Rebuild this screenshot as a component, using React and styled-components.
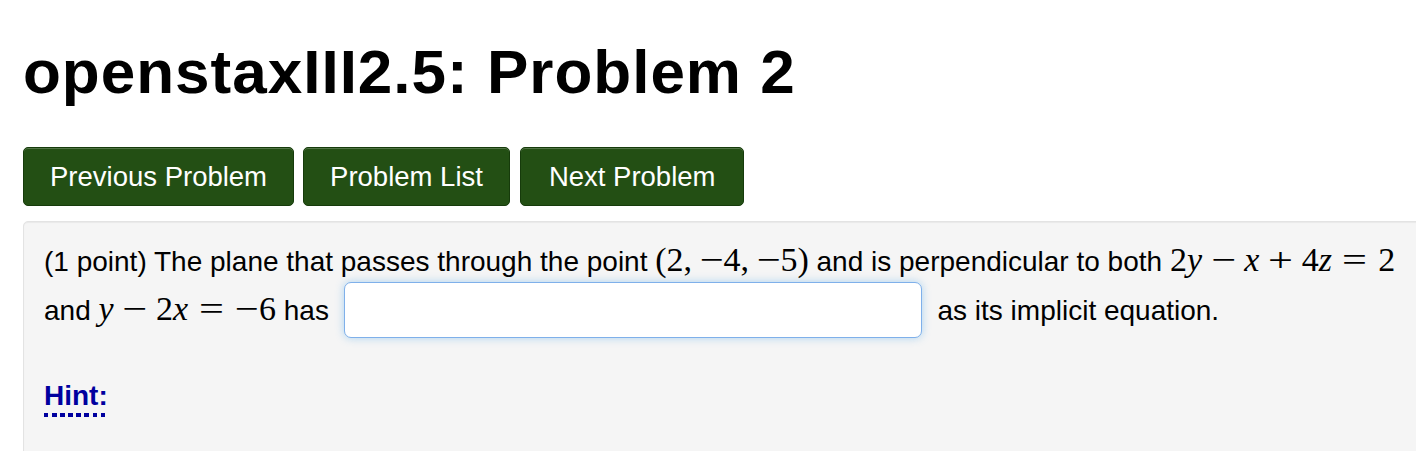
import React from "react";
import styled, { createGlobalStyle } from "styled-components";

const Global = createGlobalStyle`
  html, body {
    margin: 0;
    padding: 0;
    background: #ffffff;
    overflow: hidden;
  }
  body {
    font-family: "Liberation Sans", Arial, Helvetica, sans-serif;
    color: #000;
  }
`;

const Page = styled.div`
  width: 1480px;
  padding-left: 23px;
  box-sizing: border-box;
`;

const Title = styled.h1`
  margin: 41px 0 0;
  font-size: 62px;
  line-height: 62px;
  font-weight: 700;
  letter-spacing: 1px;
`;

const Nav = styled.div`
  display: flex;
  gap: 9px;
  margin-top: 44px;
`;

const NavButton = styled.button`
  height: 59px;
  padding: 0 26px;
  display: flex;
  align-items: center;
  justify-content: center;
  box-sizing: border-box;
  background: #234f14;
  border: 1px solid #163b0b;
  border-radius: 5px;
  box-shadow: inset 0 1px 0 rgba(255, 255, 255, 0.22);
  color: #ffffff;
  font-family: "Liberation Sans", Arial, sans-serif;
  font-size: 27.5px;
  cursor: pointer;
  &:last-child {
    padding: 0 28px;
    margin-left: 1px;
  }
`;

const Well = styled.div`
  margin-top: 15px;
  background: #f5f5f5;
  border: 1px solid #e3e3e3;
  border-radius: 5px;
  box-shadow: inset 0 1px 1px rgba(0, 0, 0, 0.05);
  padding: 17px 20px;
  min-height: 400px;
`;

const Problem = styled.div`
  font-size: 28px;
  line-height: 46px;
`;

const Math = styled.span`
  font-family: "Liberation Serif", "Times New Roman", serif;
  font-size: 34px;
  line-height: 1;
  white-space: nowrap;
`;

const V = styled.i`
  font-style: italic;
`;

const Op = styled.span`
  display: inline-block;
  margin: 0 ${(p) => (p.$rel ? "0.4em" : p.$neg ? "0.08em" : "0.34em")};
  transform: scaleX(${(p) => (p.$neg ? 1.25 : 1.3)});
`;

const Sep = styled.span`
  margin-right: 0.2em;
`;

const AnswerInput = styled.input`
  width: 578px;
  height: 56px;
  box-sizing: border-box;
  margin: 0 8px 0 7px;
  vertical-align: middle;
  background: #ffffff;
  border: 1px solid #7fb0ea;
  border-radius: 7px;
  box-shadow: 0 0 8px rgba(82, 168, 236, 0.45);
  outline: none;
  font-size: 28px;
  position: relative;
  top: -3px;
`;

const HintRow = styled.div`
  margin-top: 32px;
  font-size: 28px;
  line-height: 46px;
`;

const HintLink = styled.span`
  font-weight: 700;
  color: #00009f;
  padding-bottom: 6px;
  background-image: repeating-linear-gradient(
    to right,
    #00009f 0,
    #00009f 4.5px,
    transparent 4.5px,
    transparent 8.1px
  );
  background-size: 100% 4px;
  background-repeat: no-repeat;
  background-position: 0 100%;
  cursor: pointer;
`;

export default function App() {
  return (
    <>
      <Global />
      <Page>
        <Title>openstaxIII2.5: Problem 2</Title>
        <Nav>
          <NavButton>Previous Problem</NavButton>
          <NavButton>Problem List</NavButton>
          <NavButton>Next Problem</NavButton>
        </Nav>
        <Well>
          <Problem>
            (1 point) The plane that passes through the point{" "}
            <Math>
              (2,<Sep />
              <Op $neg>−</Op>4,<Sep />
              <Op $neg>−</Op>5)
            </Math>{" "}
            and is perpendicular to both{" "}
            <Math>
              2<V>y</V>
              <Op>−</Op>
              <V>x</V>
              <Op>+</Op>4<V>z</V>
              <Op $rel>=</Op>2
            </Math>
            <br />
            and{" "}
            <Math>
              <V>y</V>
              <Op>−</Op>2<V>x</V>
              <Op $rel>=</Op>
              <Op $neg>−</Op>6
            </Math>{" "}
            has <AnswerInput type="text" aria-label="answer" /> as its implicit
            equation.
          </Problem>
          <HintRow>
            <HintLink>Hint:</HintLink>
          </HintRow>
        </Well>
      </Page>
    </>
  );
}
